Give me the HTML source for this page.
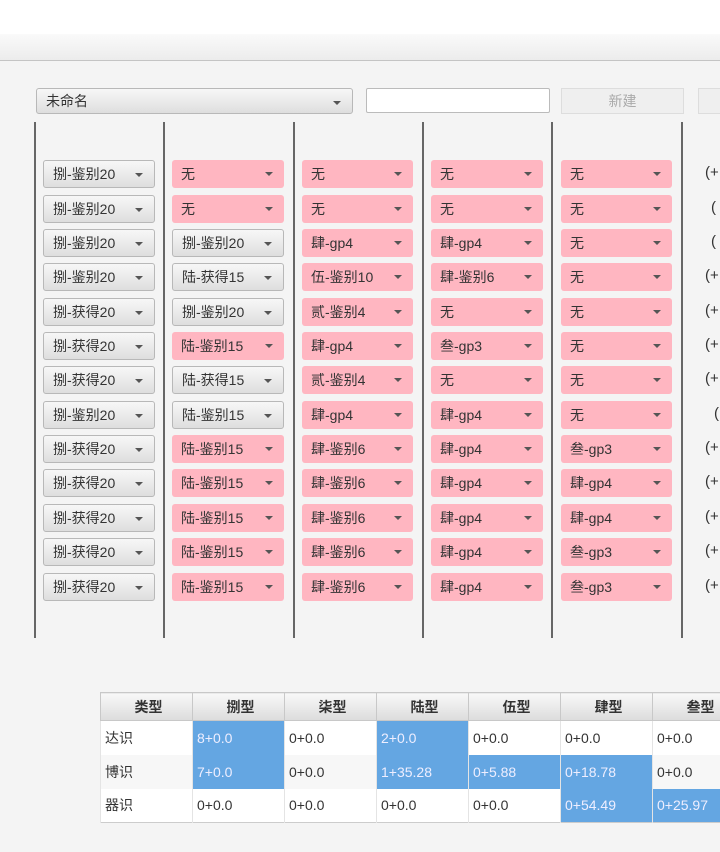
<!DOCTYPE html>
<html><head><meta charset="utf-8"><style>
*{margin:0;padding:0;box-sizing:border-box}
body{width:720px;height:852px;overflow:hidden;background:#f4f4f4;font-family:"Liberation Sans","Noto Sans CJK SC",sans-serif;font-size:14px;color:#333;position:relative}
.top{position:absolute;left:0;top:0;width:720px;height:34px;background:#fff}
.bar{position:absolute;left:0;top:34px;width:720px;height:27px;background:linear-gradient(#fafafa,#ececec);border-bottom:1px solid #c4c4c4}
.c{position:absolute;height:28px;border-radius:3px;padding-left:9px;line-height:28px;white-space:nowrap}
.g{background:linear-gradient(#f7f7f7,#dedede);border:1px solid #b8b8b8;line-height:26px}
.p{background:#ffb6c1}
.c:after{content:"";position:absolute;right:11px;top:12px;border-left:4px solid transparent;border-right:4px solid transparent;border-top:4px solid #555}
.v{position:absolute;top:122px;width:2px;height:516px;background:#666}
.r{position:absolute;font-size:15px}
table{position:absolute;left:100px;top:692px;border-collapse:collapse;background:#fff;border:1px solid #ccc;table-layout:fixed;width:644px}
td,th{width:92px;height:34px;border-left:1px solid #e4e4e4;text-align:left;padding-left:4px;font-weight:normal;font-size:14px;vertical-align:middle;white-space:nowrap;overflow:hidden}
th{height:28px;text-align:center;font-weight:bold;background:linear-gradient(#f8f8f8,#dcdcdc);border:1px solid #c8c8c8}
tr:nth-child(3) td{background:#f7f7f7}
td.b{background:#64a6e2!important;color:#eef}
</style></head><body>
<div class="top"></div><div class="bar"></div>
<div class="c g" style="left:36px;top:88px;width:317px;height:26px;line-height:24px">未命名</div>
<div style="position:absolute;left:366px;top:88px;width:184px;height:25px;background:#fff;border:1px solid #bbb;border-radius:2px"></div>
<div style="position:absolute;left:561px;top:88px;width:123px;height:26px;border:1px solid #ddd;background:#efefef;color:#aaa;text-align:center;line-height:24px">新建</div>
<div style="position:absolute;left:698px;top:88px;width:30px;height:26px;border:1px solid #ddd;background:#efefef"></div>
<div class="v" style="left:34px"></div><div class="v" style="left:163px"></div><div class="v" style="left:293px"></div><div class="v" style="left:422px"></div><div class="v" style="left:551px"></div><div class="v" style="left:681px"></div>

<div class="c g" style="left:43px;top:160px;width:112px">捌-鉴别20</div><div class="c p" style="left:172px;top:160px;width:112px">无</div><div class="c p" style="left:302px;top:160px;width:111px">无</div><div class="c p" style="left:431px;top:160px;width:112px">无</div><div class="c p" style="left:561px;top:160px;width:111px">无</div><div class="r" style="left:705px;top:164px">(+</div>
<div class="c g" style="left:43px;top:195px;width:112px">捌-鉴别20</div><div class="c p" style="left:172px;top:195px;width:112px">无</div><div class="c p" style="left:302px;top:195px;width:111px">无</div><div class="c p" style="left:431px;top:195px;width:112px">无</div><div class="c p" style="left:561px;top:195px;width:111px">无</div><div class="r" style="left:711px;top:199px">(</div>
<div class="c g" style="left:43px;top:229px;width:112px">捌-鉴别20</div><div class="c g" style="left:172px;top:229px;width:112px">捌-鉴别20</div><div class="c p" style="left:302px;top:229px;width:111px">肆-gp4</div><div class="c p" style="left:431px;top:229px;width:112px">肆-gp4</div><div class="c p" style="left:561px;top:229px;width:111px">无</div><div class="r" style="left:711px;top:233px">(</div>
<div class="c g" style="left:43px;top:263px;width:112px">捌-鉴别20</div><div class="c g" style="left:172px;top:263px;width:112px">陆-获得15</div><div class="c p" style="left:302px;top:263px;width:111px">伍-鉴别10</div><div class="c p" style="left:431px;top:263px;width:112px">肆-鉴别6</div><div class="c p" style="left:561px;top:263px;width:111px">无</div><div class="r" style="left:705px;top:267px">(+</div>
<div class="c g" style="left:43px;top:298px;width:112px">捌-获得20</div><div class="c g" style="left:172px;top:298px;width:112px">捌-鉴别20</div><div class="c p" style="left:302px;top:298px;width:111px">贰-鉴别4</div><div class="c p" style="left:431px;top:298px;width:112px">无</div><div class="c p" style="left:561px;top:298px;width:111px">无</div><div class="r" style="left:705px;top:302px">(+</div>
<div class="c g" style="left:43px;top:332px;width:112px">捌-获得20</div><div class="c p" style="left:172px;top:332px;width:112px">陆-鉴别15</div><div class="c p" style="left:302px;top:332px;width:111px">肆-gp4</div><div class="c p" style="left:431px;top:332px;width:112px">叁-gp3</div><div class="c p" style="left:561px;top:332px;width:111px">无</div><div class="r" style="left:705px;top:336px">(+</div>
<div class="c g" style="left:43px;top:366px;width:112px">捌-获得20</div><div class="c g" style="left:172px;top:366px;width:112px">陆-获得15</div><div class="c p" style="left:302px;top:366px;width:111px">贰-鉴别4</div><div class="c p" style="left:431px;top:366px;width:112px">无</div><div class="c p" style="left:561px;top:366px;width:111px">无</div><div class="r" style="left:705px;top:370px">(+</div>
<div class="c g" style="left:43px;top:401px;width:112px">捌-鉴别20</div><div class="c g" style="left:172px;top:401px;width:112px">陆-鉴别15</div><div class="c p" style="left:302px;top:401px;width:111px">肆-gp4</div><div class="c p" style="left:431px;top:401px;width:112px">肆-gp4</div><div class="c p" style="left:561px;top:401px;width:111px">无</div><div class="r" style="left:714px;top:405px">(</div>
<div class="c g" style="left:43px;top:435px;width:112px">捌-获得20</div><div class="c p" style="left:172px;top:435px;width:112px">陆-鉴别15</div><div class="c p" style="left:302px;top:435px;width:111px">肆-鉴别6</div><div class="c p" style="left:431px;top:435px;width:112px">肆-gp4</div><div class="c p" style="left:561px;top:435px;width:111px">叁-gp3</div><div class="r" style="left:705px;top:439px">(+</div>
<div class="c g" style="left:43px;top:469px;width:112px">捌-获得20</div><div class="c p" style="left:172px;top:469px;width:112px">陆-鉴别15</div><div class="c p" style="left:302px;top:469px;width:111px">肆-鉴别6</div><div class="c p" style="left:431px;top:469px;width:112px">肆-gp4</div><div class="c p" style="left:561px;top:469px;width:111px">肆-gp4</div><div class="r" style="left:705px;top:473px">(+</div>
<div class="c g" style="left:43px;top:504px;width:112px">捌-获得20</div><div class="c p" style="left:172px;top:504px;width:112px">陆-鉴别15</div><div class="c p" style="left:302px;top:504px;width:111px">肆-鉴别6</div><div class="c p" style="left:431px;top:504px;width:112px">肆-gp4</div><div class="c p" style="left:561px;top:504px;width:111px">肆-gp4</div><div class="r" style="left:705px;top:508px">(+</div>
<div class="c g" style="left:43px;top:538px;width:112px">捌-获得20</div><div class="c p" style="left:172px;top:538px;width:112px">陆-鉴别15</div><div class="c p" style="left:302px;top:538px;width:111px">肆-鉴别6</div><div class="c p" style="left:431px;top:538px;width:112px">肆-gp4</div><div class="c p" style="left:561px;top:538px;width:111px">叁-gp3</div><div class="r" style="left:705px;top:542px">(+</div>
<div class="c g" style="left:43px;top:573px;width:112px">捌-获得20</div><div class="c p" style="left:172px;top:573px;width:112px">陆-鉴别15</div><div class="c p" style="left:302px;top:573px;width:111px">肆-鉴别6</div><div class="c p" style="left:431px;top:573px;width:112px">肆-gp4</div><div class="c p" style="left:561px;top:573px;width:111px">叁-gp3</div><div class="r" style="left:705px;top:577px">(+</div>

<table>
<tr><th>类型</th><th>捌型</th><th>柒型</th><th>陆型</th><th>伍型</th><th>肆型</th><th>叁型</th></tr>
<tr><td>达识</td><td class="b">8+0.0</td><td>0+0.0</td><td class="b">2+0.0</td><td>0+0.0</td><td>0+0.0</td><td>0+0.0</td></tr>
<tr><td>博识</td><td class="b">7+0.0</td><td>0+0.0</td><td class="b">1+35.28</td><td class="b">0+5.88</td><td class="b">0+18.78</td><td>0+0.0</td></tr>
<tr><td>器识</td><td>0+0.0</td><td>0+0.0</td><td>0+0.0</td><td>0+0.0</td><td class="b">0+54.49</td><td class="b">0+25.97</td></tr>
</table>
</body></html>
